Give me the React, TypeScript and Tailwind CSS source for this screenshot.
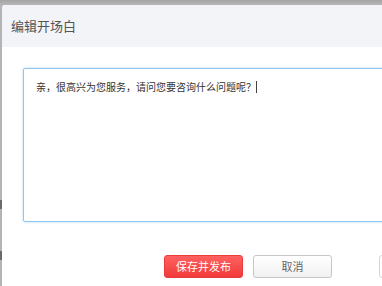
export default function App() {
  const font = { fontFamily: '"Noto Sans CJK SC", "Noto Sans", sans-serif' }

  return (
    <div className="w-[382px] h-[286px] overflow-hidden bg-[#a8a8a8] flex flex-col" style={font}>
      <div className="h-[5px] shrink-0 bg-gradient-to-b from-[#a4a4a4] to-[#b6b6b6]" />
      <div className="flex flex-1 min-h-0">
        <div className="w-[2px] shrink-0 bg-[#b4b4b4] flex flex-col">
          <div className="h-[195px]" />
          <div className="h-[9px] w-[2px] bg-[#6a6a6a]" />
          <div className="h-[42px]" />
          <div className="h-[9px] w-[2px] bg-[#6a6a6a]" />
        </div>
        <div className="flex-1 min-w-0 bg-white rounded-tl-[3px] overflow-hidden flex flex-col">
          <div className="h-[42px] shrink-0 bg-[#f3f4f8] flex items-center pl-[9px] text-[13px] text-[#555]">
            编辑开场白
          </div>
          <div className="pt-[21px] pl-[21px]">
            <div className="w-[400px] h-[154px] border border-[#93c6ef] shadow-[0_0_3px_#b5dcf8] rounded-[2px] bg-white pt-[11px] pl-[12px] text-[10px] leading-[14px] text-[#333] flex items-start">
              <span>亲，很高兴为您服务，请问您要咨询什么问题呢？</span>
              <span className="mt-[1px] w-px h-[12px] bg-[#444]" />
            </div>
          </div>
          <div className="pt-[33px] pl-[162px] flex items-start">
            <button className="shrink-0 w-[79px] h-[23px] rounded-[3px] border border-[#ea3b3b] bg-gradient-to-b from-[#ff6060] to-[#f03a3a] text-white text-[11px] flex items-center justify-center">
              保存并发布
            </button>
            <button className="shrink-0 ml-[10px] w-[79px] h-[23px] rounded-[3px] border border-[#c6c6c6] bg-gradient-to-b from-white to-[#f1f1f1] text-[#666] text-[11px] flex items-center justify-center">
              取消
            </button>
            <div className="shrink-0 ml-[47px] w-[20px] h-[23px] rounded-[3px] border border-[#d6d6d6] bg-white" />
          </div>
        </div>
      </div>
    </div>
  )
}
